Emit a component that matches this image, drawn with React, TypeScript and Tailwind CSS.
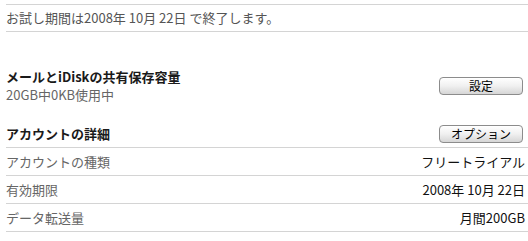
const rows = [
  { label: "アカウントの種類", value: "フリートライアル" },
  { label: "有効期限", value: "2008年 10月 22日" },
  { label: "データ転送量", value: "月間200GB" },
];

function MacButton({ children }: { children: React.ReactNode }) {
  return (
    <button
      type="button"
      className="w-[84px] h-[18px] shrink-0 rounded-[4px] border border-[#8c8c8c] bg-gradient-to-b from-white via-[#f0f0f0] to-[#d6d6d6] text-[12px] leading-none text-black shadow-[inset_0_1px_0_#fff]"
    >
      {children}
    </button>
  );
}

export default function App() {
  return (
    <div className="w-[528px] h-[241px] bg-white overflow-hidden pl-1.5 pt-1 font-['Noto_Sans_CJK_JP',sans-serif]">
      <div className="h-[28px] border-y border-[#d4d4d4] flex items-center text-[13px] text-[#555]">
        お試し期間は2008年 10月 22日 で終了します。
      </div>

      {/* storage */}
      <div className="mt-9 flex items-center justify-between pr-[5px]">
        <div>
          <div className="text-[13px] leading-[18px] font-bold text-[#1a1a1a]">
            メールとiDiskの共有保存容量
          </div>
          <div className="text-[13px] leading-[17px] text-[#666]">20GB中0KB使用中</div>
        </div>
        <MacButton>設定</MacButton>
      </div>

      {/* account */}
      <div className="mt-[22px] flex items-center justify-between pr-[5px] pb-[4px] border-b border-[#d4d4d4]">
        <div className="text-[13px] leading-[18px] font-bold text-[#1a1a1a]">アカウントの詳細</div>
        <MacButton>オプション</MacButton>
      </div>

      {rows.map((r) => (
        <div
          key={r.label}
          className="h-[28px] flex items-center justify-between pr-[3px] border-b border-[#d4d4d4] text-[13px]"
        >
          <span className="text-[#666]">{r.label}</span>
          <span className="text-[#111]">{r.value}</span>
        </div>
      ))}
    </div>
  );
}
